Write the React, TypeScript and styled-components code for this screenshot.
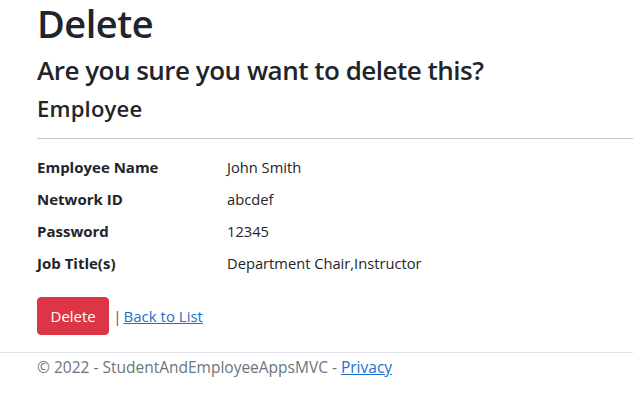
import React from 'react'
import styled, { createGlobalStyle } from 'styled-components'

const GlobalStyle = createGlobalStyle`
  html, body {
    margin: 0;
    padding: 0;
    background: #fff;
  }
  body {
    font-family: "Open Sans", "Noto Sans", Arial, sans-serif;
    color: #212529;
    font-size: 15px;
  }
`

const Main = styled.main`
  padding: 0 0 0 37px;
  min-height: 352px;
  box-sizing: border-box;
`

const PageTitle = styled.h1`
  margin: 0;
  font-size: 38px;
  font-weight: 600;
  line-height: 46px;
  letter-spacing: -0.5px;
`

const Question = styled.h3`
  margin: 8px 0 0;
  font-size: 26px;
  font-weight: 600;
  line-height: 32px;
  letter-spacing: -0.5px;
`

const EntityName = styled.h4`
  margin: 8px 0 0;
  font-size: 22px;
  font-weight: 600;
  line-height: 28px;
  letter-spacing: 0.2px;
`

const Rule = styled.hr`
  margin: 16px 0 12px;
  border: 0;
  border-top: 1px solid #c8c8c8;
`

const Details = styled.dl`
  display: grid;
  grid-template-columns: 190px 1fr;
  grid-auto-rows: 32px;
  margin: 0;
  align-items: center;
`

const Label = styled.dt`
  font-weight: 700;
  font-size: 15px;
`

const Value = styled.dd`
  margin: 0;
  font-size: 14.7px;
`

const Actions = styled.form`
  display: flex;
  align-items: center;
  margin: 18px 0 0;
  font-size: 15px;
`

const DangerButton = styled.button`
  background: #dc3545;
  color: #fff;
  border: 1px solid #dc3545;
  border-radius: 4px;
  font-family: inherit;
  font-size: 15px;
  height: 38px;
  padding: 0 12.5px;
  margin-right: 4px;
  cursor: pointer;
`

const Separator = styled.span`
  color: #555;
  margin-right: 2px;
`

const Link = styled.a`
  color: #1a6fd0;
  text-decoration: underline;
`

const Footer = styled.footer`
  border-top: 1px solid #dee2e6;
  padding: 3px 0 0 37px;
  color: #6c757d;
  font-size: 15.5px;
  line-height: 22px;
`

export default function App() {
  const rows: [string, string][] = [
    ['Employee Name', 'John Smith'],
    ['Network ID', 'abcdef'],
    ['Password', '12345'],
    ['Job Title(s)', 'Department Chair,Instructor'],
  ]
  return (
    <>
      <GlobalStyle />
      <Main>
        <PageTitle>Delete</PageTitle>
        <Question>Are you sure you want to delete this?</Question>
        <EntityName>Employee</EntityName>
        <Rule />
        <Details>
          {rows.map(([label, value]) => (
            <React.Fragment key={label}>
              <Label>{label}</Label>
              <Value>{value}</Value>
            </React.Fragment>
          ))}
        </Details>
        <Actions onSubmit={(e) => e.preventDefault()}>
          <DangerButton type="submit">Delete</DangerButton>
          <Separator>|</Separator>
          <Link href="#">Back to List</Link>
        </Actions>
      </Main>
      <Footer>
        &copy; 2022 - StudentAndEmployeeAppsMVC - <Link href="#">Privacy</Link>
      </Footer>
    </>
  )
}
